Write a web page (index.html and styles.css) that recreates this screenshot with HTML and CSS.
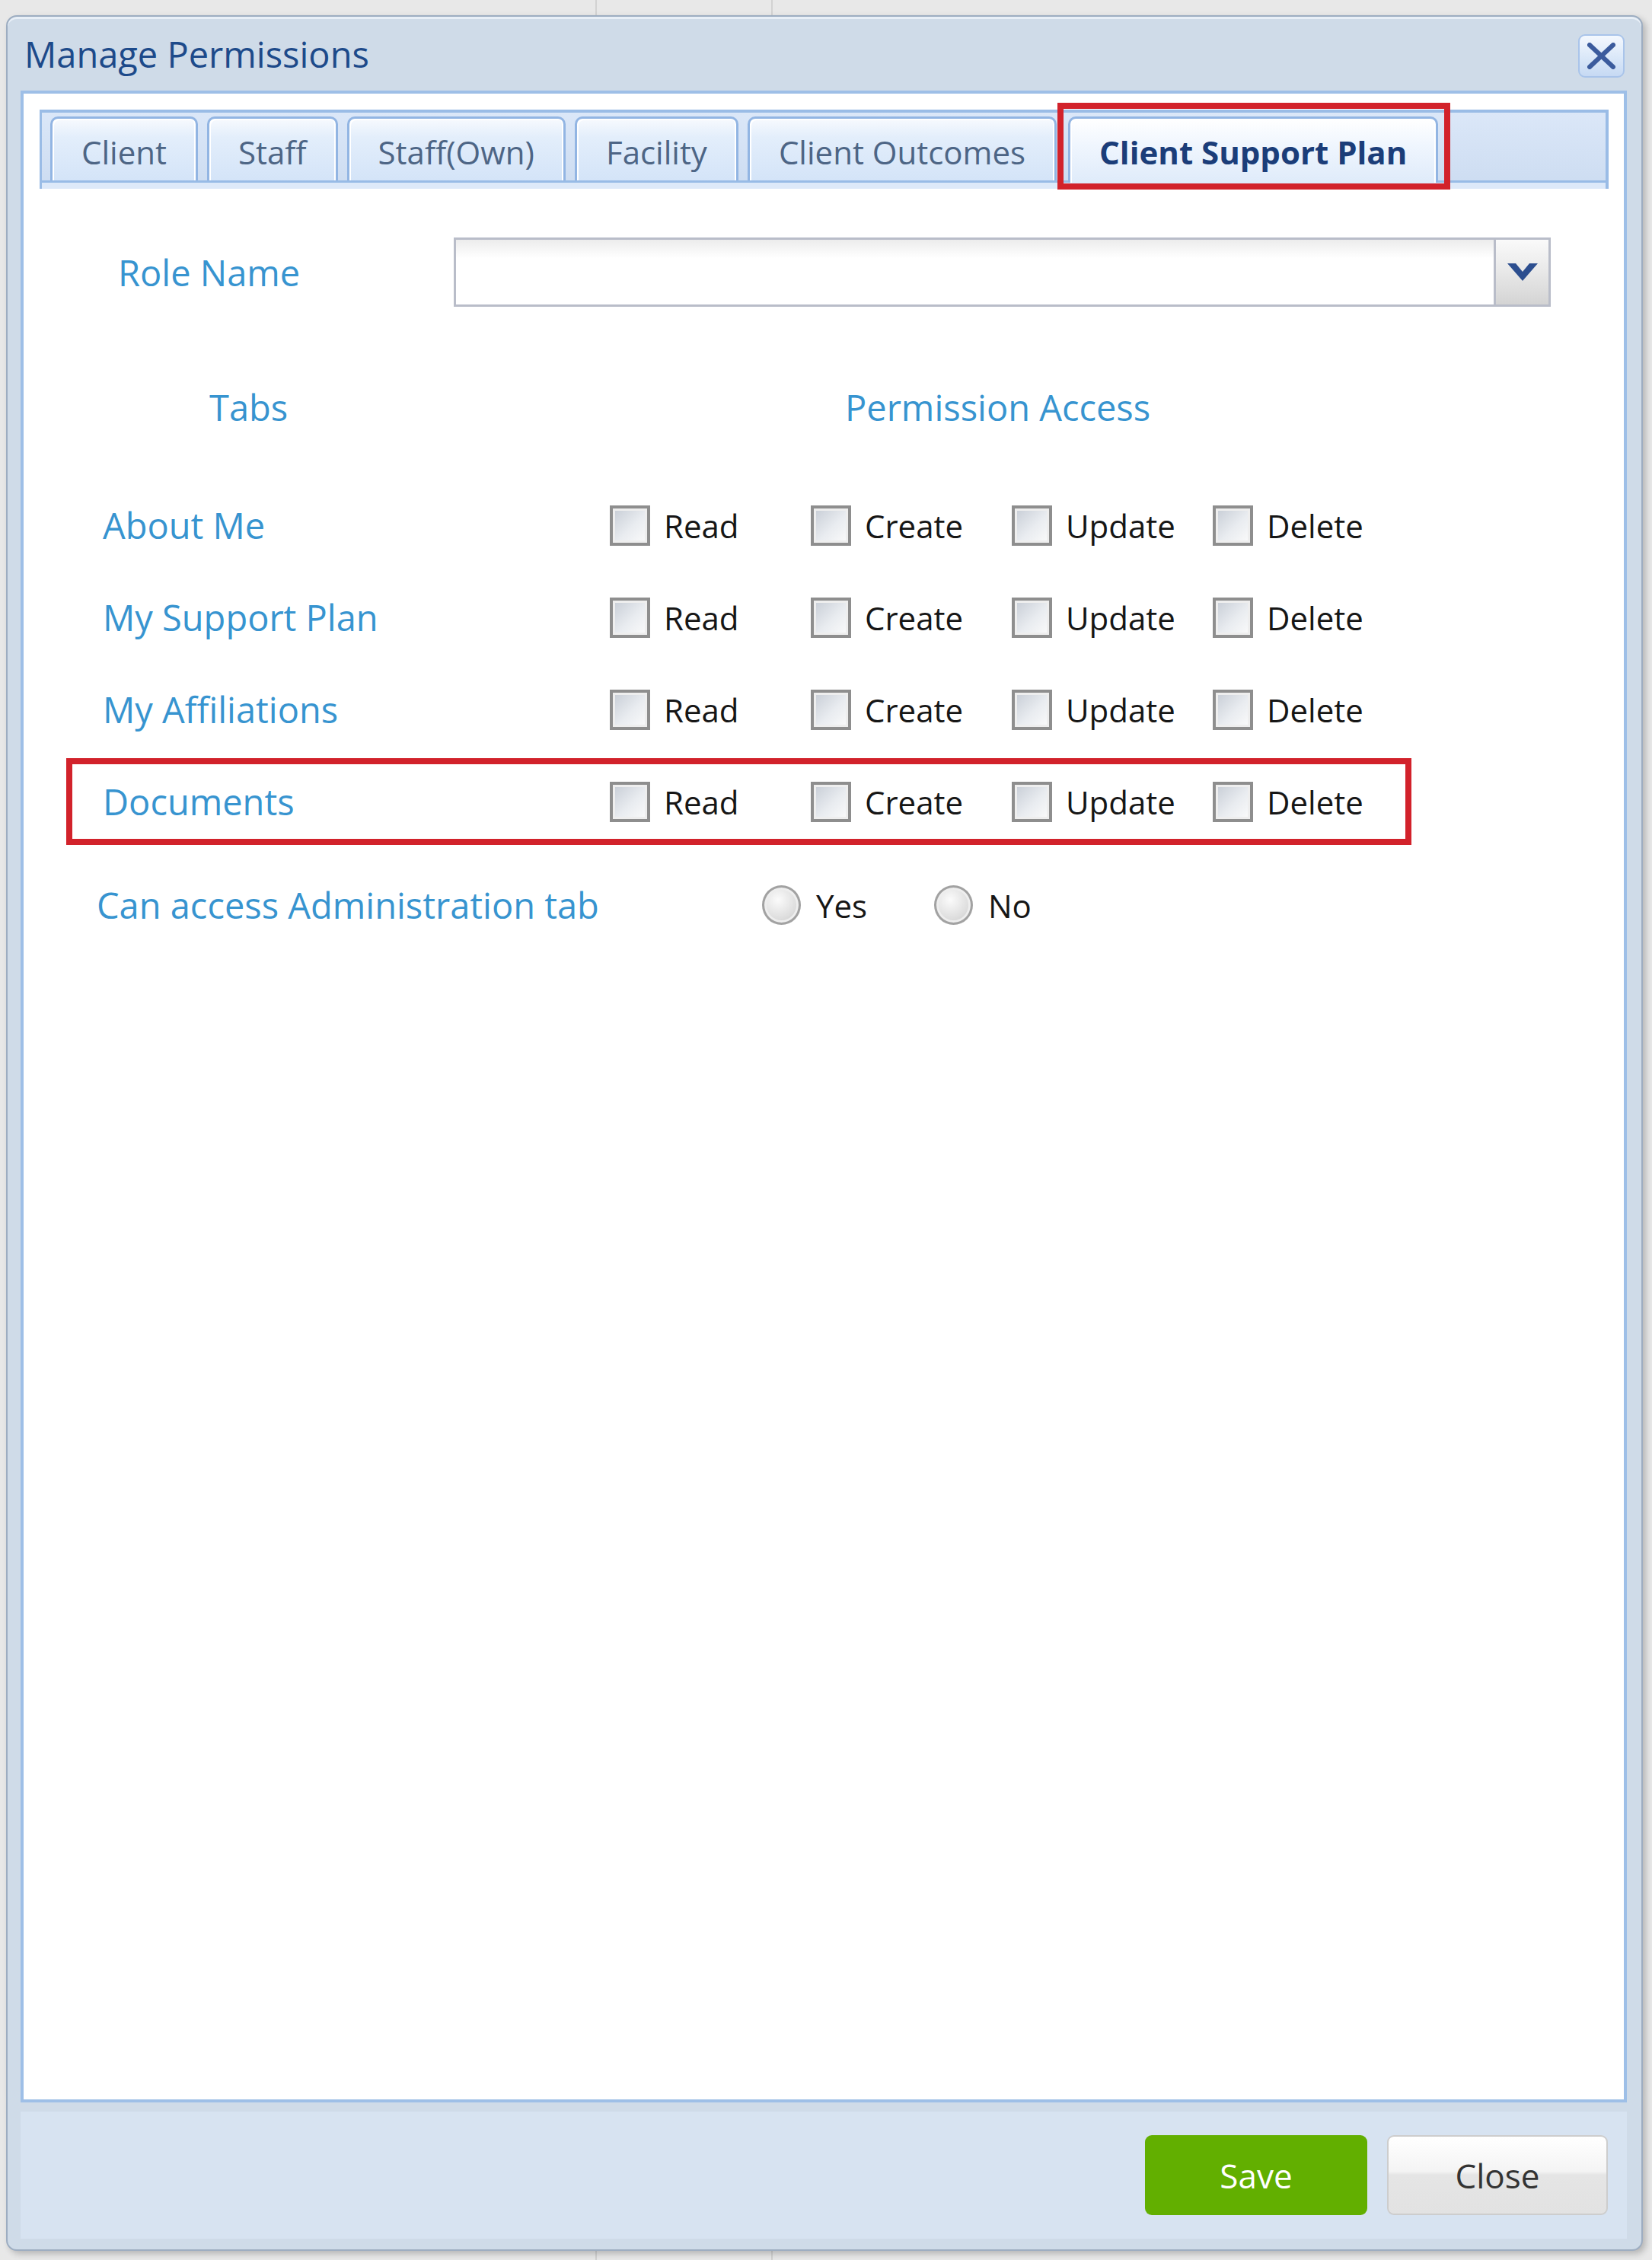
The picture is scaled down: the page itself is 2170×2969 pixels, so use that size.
FILE: index.html
```html
<!DOCTYPE html>
<html>
<head>
<meta charset="utf-8">
<title>Manage Permissions</title>
<link rel="stylesheet" href="styles.css">
</head>
<body>
<div class="dialog">
  <div class="titlebar">
    <span class="title">Manage Permissions</span>
    <button class="xbtn" aria-label="Close">
      <svg width="37" height="35" viewBox="0 0 37 35"><path d="M3 3 L34 32 M34 3 L3 32" stroke="#3b5b9d" stroke-width="6" stroke-linecap="round" fill="none"/></svg>
    </button>
  </div>
  <div class="content">
    <div class="tabstrip">
      <div class="tabs">
        <div class="tab">Client</div>
        <div class="tab">Staff</div>
        <div class="tab">Staff(Own)</div>
        <div class="tab">Facility</div>
        <div class="tab">Client Outcomes</div>
        <div class="tab active">Client Support Plan</div>
      </div>
      <div class="strip-band"></div>
    </div>

    <div class="role-row">
      <span class="role-label">Role Name</span>
      <div class="combo">
        <div class="combo-input"></div>
        <div class="combo-btn">
          <svg width="40" height="25" viewBox="0 0 40 25"><polygon points="0,1 11,1 20,12 29,1 40,1 20,24" fill="#2c4e8f"/></svg>
        </div>
      </div>
    </div>

    <div class="head-row">
      <span class="h-tabs">Tabs</span>
      <span class="h-perm">Permission Access</span>
    </div>

    <div class="perm-list">
      <div class="perm-row">
        <span class="perm-name">About Me</span>
        <label class="chk"><span class="box"></span>Read</label>
        <label class="chk"><span class="box"></span>Create</label>
        <label class="chk"><span class="box"></span>Update</label>
        <label class="chk"><span class="box"></span>Delete</label>
      </div>
      <div class="perm-row">
        <span class="perm-name">My Support Plan</span>
        <label class="chk"><span class="box"></span>Read</label>
        <label class="chk"><span class="box"></span>Create</label>
        <label class="chk"><span class="box"></span>Update</label>
        <label class="chk"><span class="box"></span>Delete</label>
      </div>
      <div class="perm-row">
        <span class="perm-name">My Affiliations</span>
        <label class="chk"><span class="box"></span>Read</label>
        <label class="chk"><span class="box"></span>Create</label>
        <label class="chk"><span class="box"></span>Update</label>
        <label class="chk"><span class="box"></span>Delete</label>
      </div>
      <div class="perm-row hl">
        <span class="perm-name">Documents</span>
        <label class="chk"><span class="box"></span>Read</label>
        <label class="chk"><span class="box"></span>Create</label>
        <label class="chk"><span class="box"></span>Update</label>
        <label class="chk"><span class="box"></span>Delete</label>
      </div>
    </div>

    <div class="admin-row">
      <span class="admin-label">Can access Administration tab</span>
      <label class="radio"><span class="rbtn"></span>Yes</label>
      <label class="radio"><span class="rbtn"></span>No</label>
    </div>
  </div>
  <div class="footer">
    <button class="btn save">Save</button>
    <button class="btn close">Close</button>
  </div>
</div>
</body>
</html>
```

FILE: styles.css
```css
html, body {
  margin: 0;
  padding: 0;
}
body {
  width: 2170px;
  height: 2969px;
  overflow: hidden;
  font-family: "Open Sans", "Noto Sans", sans-serif;
  background:
    linear-gradient(to right, transparent 782px, #d2d2d2 782px, #d2d2d2 784px, transparent 784px, transparent 1013px, #d2d2d2 1013px, #d2d2d2 1015px, transparent 1015px),
    #e8e8e8;
}

.dialog {
  margin: 20px 0 0 8px;
  width: 2150px;
  height: 2937px;
  box-sizing: border-box;
  border: 2px solid #9dadc1;
  border-radius: 14px;
  background: #cfdbe8;
  box-shadow: 4px 4px 8px rgba(0, 0, 0, 0.22), inset 0 3px 0 #e8eff7;
  display: flex;
  flex-direction: column;
  padding: 0 19px 14px 17px;
}

.titlebar {
  height: 97px;
  flex: none;
  display: flex;
  align-items: center;
  justify-content: space-between;
  padding: 0 3px 0 5px;
}
.title {
  font-size: 47px;
  color: #1d4a8a;
}
.xbtn {
  width: 61px;
  height: 57px;
  margin-top: 6px;
  padding: 0;
  box-sizing: border-box;
  border: 2px solid #a9c4ea;
  border-radius: 9px;
  background: linear-gradient(#f4f8fe, #dce9f9 50%, #c6d9f3);
  display: flex;
  align-items: center;
  justify-content: center;
}

.content {
  height: 2643px;
  flex: none;
  box-sizing: border-box;
  border: 4px solid #9ebfe7;
  background: #ffffff;
  display: flex;
  flex-direction: column;
}

.tabstrip {
  margin: 21px 20px 0 21px;
  border: 4px solid #9abce6;
  border-left-width: 3px;
  border-bottom: none;
  background: linear-gradient(#dbe7f8, #ccdcf1);
}
.tabs {
  height: 84px;
  padding: 5px 0 0 11px;
  display: flex;
  align-items: flex-end;
  gap: 12px;
  border-bottom: 3px solid #98bbe6;
}
.strip-band {
  height: 8px;
  background: #dde9f9;
}
.tab {
  position: relative;
  height: 84px;
  box-sizing: border-box;
  padding: 6px 38px 0;
  border: 3px solid #92b5e3;
  border-bottom: none;
  border-radius: 10px 10px 0 0;
  background: linear-gradient(#f7fafe, #e3eefb 30%, #d4e4f8);
  box-shadow: inset 2px 2px 0 #ffffff, inset -2px 0 0 #ffffff;
  font-size: 42px;
  color: #4d6585;
  display: flex;
  align-items: center;
  white-space: nowrap;
}
.tab.active {
  height: 87px;
  margin-left: 3px;
  margin-bottom: -3px;
  z-index: 1;
  padding-bottom: 3px;
  background: linear-gradient(#ffffff, #f0f6fe 40%, #dfebfa);
  font-weight: 700;
  color: #1b3d79;
}
.tab.active::after {
  content: "";
  position: absolute;
  left: -17px;
  right: -19px;
  top: -21px;
  bottom: -9px;
  border: 8px solid #d2222b;
}

.role-row {
  margin-top: 64px;
  height: 91px;
  display: flex;
  align-items: center;
  padding-left: 124px;
}
.role-label {
  width: 441px;
  font-size: 47px;
  color: #3794d0;
}
.combo {
  width: 1441px;
  height: 91px;
  box-sizing: border-box;
  border: 3px solid #b9bdc9;
  display: flex;
  background: linear-gradient(#ececec, #ffffff 24px);
}
.combo-input {
  flex: 1;
}
.combo-btn {
  width: 69px;
  border-left: 3px solid #b9bdc9;
  background: linear-gradient(#fafafa, #e8e8e8 50%, #d4d4d4);
  display: flex;
  align-items: center;
  justify-content: center;
}

.head-row {
  margin-top: 102px;
  height: 60px;
  display: flex;
  align-items: center;
  padding-left: 244px;
  font-size: 47px;
  color: #3794d0;
}
.h-tabs {
  width: 835px;
}

.perm-list {
  margin-top: 68px;
  margin-left: 56px;
  width: 1767px;
  display: flex;
  flex-direction: column;
  gap: 7px;
}
.perm-row {
  height: 114px;
  box-sizing: border-box;
  padding-left: 48px;
  display: grid;
  grid-template-columns: 666px repeat(4, 264px);
  align-items: center;
}
.perm-row.hl {
  outline: 8px solid #d2222b;
  outline-offset: -8px;
}
.perm-name {
  font-size: 47px;
  color: #3794d0;
}
.chk {
  display: flex;
  align-items: center;
  gap: 18px;
  font-size: 42px;
  color: #161616;
}
.box {
  width: 53px;
  height: 53px;
  flex: none;
  box-sizing: border-box;
  border: 4px solid #8e8e8e;
  background: linear-gradient(135deg, #c6ccd5, #e9ecf0 55%, #fbfbfb);
  box-shadow: inset 0 0 0 3px #eeeeee;
}

.admin-row {
  margin-top: 22px;
  height: 114px;
  display: flex;
  align-items: center;
  padding-left: 96px;
}
.admin-label {
  width: 874px;
  font-size: 47px;
  color: #3794d0;
}
.radio {
  width: 226px;
  display: flex;
  align-items: center;
  gap: 20px;
  font-size: 42px;
  color: #161616;
}
.rbtn {
  width: 51px;
  height: 52px;
  flex: none;
  box-sizing: border-box;
  border-radius: 50%;
  border: 3px solid #a2a2a2;
  background: radial-gradient(circle at 40% 35%, #fbfbfb, #dedede 60%, #c4c4c4);
  box-shadow: inset 0 0 0 3px #eeeeee;
}

.footer {
  margin-top: 12px;
  height: 167px;
  flex: none;
  background: #d7e3f1;
  display: flex;
  align-items: center;
  justify-content: flex-end;
  gap: 26px;
  padding-right: 25px;
}
.btn {
  height: 105px;
  box-sizing: border-box;
  border-radius: 9px;
  font-family: "Open Sans", "Noto Sans", sans-serif;
  font-size: 44px;
  padding: 0;
}
.btn.save {
  width: 292px;
  border: none;
  background: #62af00;
  color: #ffffff;
}
.btn.close {
  width: 290px;
  border: 2px solid #cdcdcd;
  background: linear-gradient(#ffffff, #f4f4f4 45%, #e5e5e5 50%, #e2e2e2);
  color: #333333;
}
```
